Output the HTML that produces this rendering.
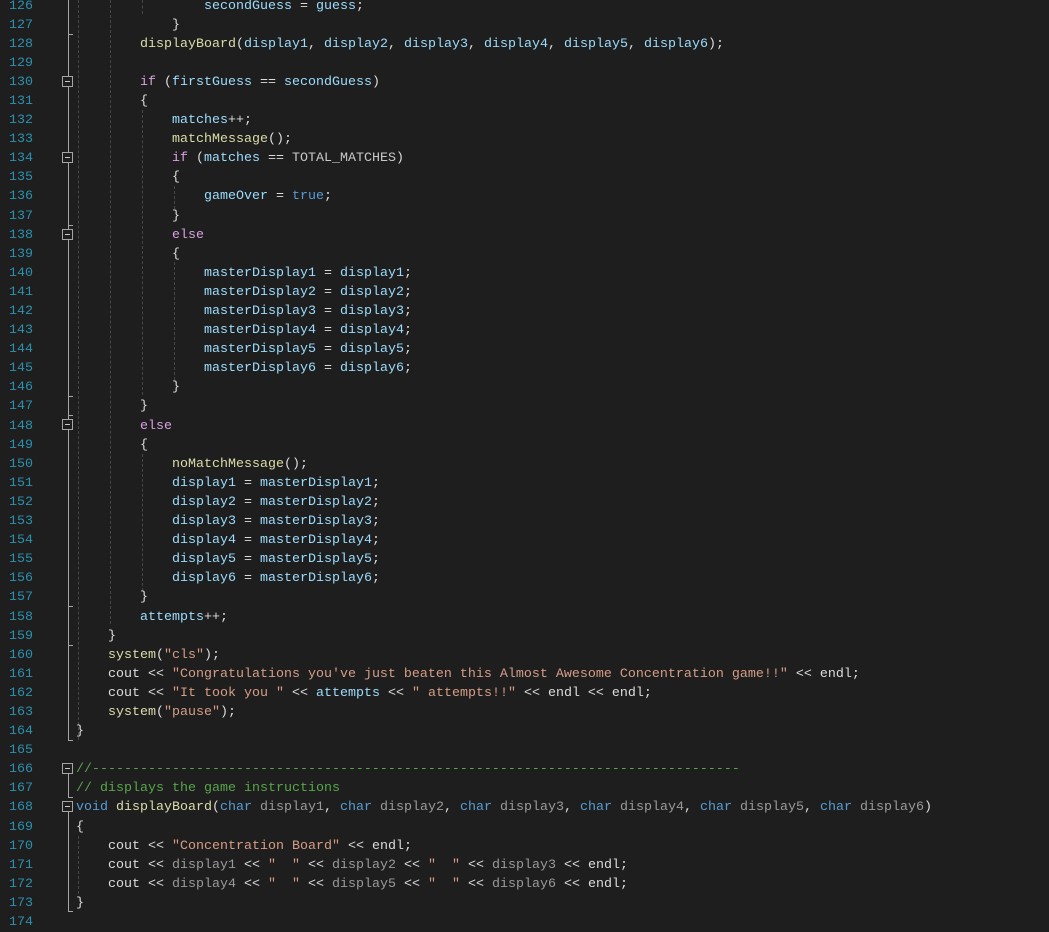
<!DOCTYPE html>
<html><head><meta charset="utf-8"><style>
html,body{margin:0;padding:0;background:#1e1e1e;width:1049px;height:932px;overflow:hidden;position:relative}
.ln,.code{position:absolute;top:-3.5px;font-family:"Liberation Mono",monospace;font-size:13.33px;line-height:19.1px;white-space:pre}
.ln{left:0;width:33px;text-align:right;color:#2b91af}
.code{left:76px;color:#dcdcdc}
.k{color:#569cd6}.c{color:#d8a0df}.f{color:#dcdcaa}.v{color:#9cdcfe}.p{color:#9a9a9a}.s{color:#d69d85}.m{color:#57a64a}.t{color:#c8c8c8}
.g{position:absolute;width:0;border-left:1px dashed #464646}
.gl{position:absolute;left:68px;width:1px;background:#a5a5a5}
.tk{position:absolute;left:68px;width:5px;height:1px;background:#a5a5a5}
.bx{position:absolute;left:62px;width:9px;height:9px;border:1px solid #a5a5a5;background:#1e1e1e}
.bx:after{content:"";position:absolute;left:2px;top:4px;width:5px;height:1px;background:#c8c8c8}
</style></head><body>
<div class="g" style="left:78px;top:0;height:740px"></div>
<div class="g" style="left:78px;top:836px;height:58px"></div>
<div class="g" style="left:110px;top:0;height:624px"></div>
<div class="g" style="left:142px;top:0;height:14px"></div>
<div class="g" style="left:142px;top:110px;height:285px"></div>
<div class="g" style="left:142px;top:454px;height:137px"></div>
<div class="g" style="left:174px;top:186px;height:23px"></div>
<div class="g" style="left:174px;top:262px;height:118px"></div>

<div class="gl" style="top:0;height:741px"></div>
<div class="tk" style="top:34px"></div>
<div class="tk" style="top:225px"></div>
<div class="tk" style="top:396px"></div>
<div class="tk" style="top:415px"></div>
<div class="tk" style="top:606px"></div>
<div class="tk" style="top:645px"></div>
<div class="tk" style="top:740px"></div>
<div class="gl" style="top:773px;height:25px"></div>
<div class="tk" style="top:797px"></div>
<div class="gl" style="top:811px;height:101px"></div>
<div class="tk" style="top:911px"></div>
<div class="bx" style="top:76px"></div>
<div class="bx" style="top:152px"></div>
<div class="bx" style="top:229px"></div>
<div class="bx" style="top:419px"></div>
<div class="bx" style="top:763px"></div>
<div class="bx" style="top:801px"></div>

<div class="ln">126
127
128
129
130
131
132
133
134
135
136
137
138
139
140
141
142
143
144
145
146
147
148
149
150
151
152
153
154
155
156
157
158
159
160
161
162
163
164
165
166
167
168
169
170
171
172
173
174</div>
<div class="code">                <span class="v">secondGuess</span> = <span class="v">guess</span>;
            }
        <span class="f">displayBoard</span>(<span class="v">display1</span>, <span class="v">display2</span>, <span class="v">display3</span>, <span class="v">display4</span>, <span class="v">display5</span>, <span class="v">display6</span>);

        <span class="c">if</span> (<span class="v">firstGuess</span> == <span class="v">secondGuess</span>)
        {
            <span class="v">matches</span>++;
            <span class="f">matchMessage</span>();
            <span class="c">if</span> (<span class="v">matches</span> == <span class="t">TOTAL_MATCHES</span>)
            {
                <span class="v">gameOver</span> = <span class="k">true</span>;
            }
            <span class="c">else</span>
            {
                <span class="v">masterDisplay1</span> = <span class="v">display1</span>;
                <span class="v">masterDisplay2</span> = <span class="v">display2</span>;
                <span class="v">masterDisplay3</span> = <span class="v">display3</span>;
                <span class="v">masterDisplay4</span> = <span class="v">display4</span>;
                <span class="v">masterDisplay5</span> = <span class="v">display5</span>;
                <span class="v">masterDisplay6</span> = <span class="v">display6</span>;
            }
        }
        <span class="c">else</span>
        {
            <span class="f">noMatchMessage</span>();
            <span class="v">display1</span> = <span class="v">masterDisplay1</span>;
            <span class="v">display2</span> = <span class="v">masterDisplay2</span>;
            <span class="v">display3</span> = <span class="v">masterDisplay3</span>;
            <span class="v">display4</span> = <span class="v">masterDisplay4</span>;
            <span class="v">display5</span> = <span class="v">masterDisplay5</span>;
            <span class="v">display6</span> = <span class="v">masterDisplay6</span>;
        }
        <span class="v">attempts</span>++;
    }
    <span class="f">system</span>(<span class="s">"cls"</span>);
    cout &lt;&lt; <span class="s">"Congratulations you've just beaten this Almost Awesome Concentration game!!"</span> &lt;&lt; endl;
    cout &lt;&lt; <span class="s">"It took you "</span> &lt;&lt; <span class="v">attempts</span> &lt;&lt; <span class="s">" attempts!!"</span> &lt;&lt; endl &lt;&lt; endl;
    <span class="f">system</span>(<span class="s">"pause"</span>);
}

<span class="m">//---------------------------------------------------------------------------------</span>
<span class="m">// displays the game instructions</span>
<span class="k">void</span> <span class="f">displayBoard</span>(<span class="k">char</span> <span class="p">display1</span>, <span class="k">char</span> <span class="p">display2</span>, <span class="k">char</span> <span class="p">display3</span>, <span class="k">char</span> <span class="p">display4</span>, <span class="k">char</span> <span class="p">display5</span>, <span class="k">char</span> <span class="p">display6</span>)
{
    cout &lt;&lt; <span class="s">"Concentration Board"</span> &lt;&lt; endl;
    cout &lt;&lt; <span class="p">display1</span> &lt;&lt; <span class="s">"  "</span> &lt;&lt; <span class="p">display2</span> &lt;&lt; <span class="s">"  "</span> &lt;&lt; <span class="p">display3</span> &lt;&lt; endl;
    cout &lt;&lt; <span class="p">display4</span> &lt;&lt; <span class="s">"  "</span> &lt;&lt; <span class="p">display5</span> &lt;&lt; <span class="s">"  "</span> &lt;&lt; <span class="p">display6</span> &lt;&lt; endl;
}
</div>
</body></html>
